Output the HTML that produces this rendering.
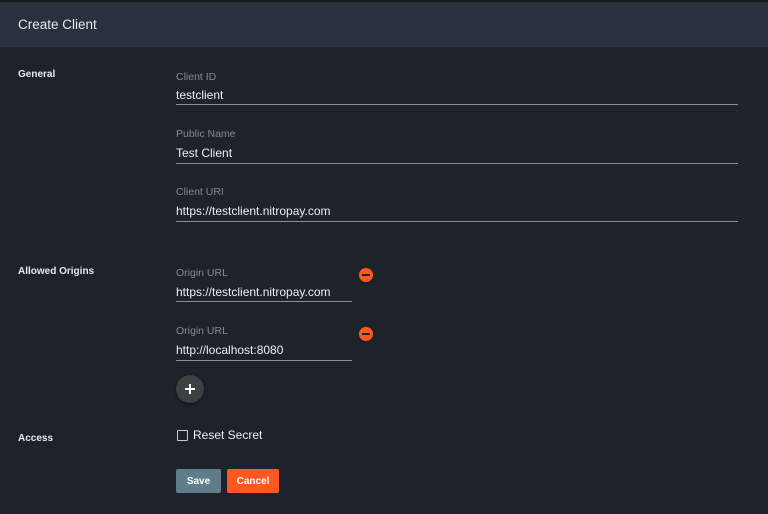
<!DOCTYPE html>
<html><head><style>
*{margin:0;padding:0;box-sizing:border-box}
body{width:768px;height:514px;background:#1d222b;font-family:"Liberation Sans",sans-serif;position:relative;overflow:hidden;color:#e6e8ea}
.hdr{position:absolute;left:0;top:0;width:768px;height:47px;background:#28313d;border-top:2px solid #161a20}
.hdr span{position:absolute;left:18px;top:15px;font-size:13.5px;color:#e8eaed}
.sec{position:absolute;left:18px;font-size:10px;font-weight:bold;color:#e6e8ea}
.lbl{position:absolute;left:176px;font-size:10.5px;color:#858b93}
.val{position:absolute;left:176px;font-size:12px;color:#eceef0}
.ln{position:absolute;left:176px;height:1px;background:#8a8f96}
.minus{position:absolute;width:14px;height:14px;border-radius:50%;background:#ff5722}
.minus:after{content:"";position:absolute;left:3px;top:6px;width:8px;height:2px;background:#1d222b}
.plus{position:absolute;left:176px;top:375px;width:28px;height:28px;border-radius:50%;background:#3e3f41;box-shadow:0 1px 3px rgba(0,0,0,.5)}
.plus:before{content:"";position:absolute;left:9px;top:13px;width:10px;height:2px;background:#fff}
.plus:after{content:"";position:absolute;left:13px;top:9px;width:2px;height:10px;background:#fff}
.btn{position:absolute;top:469px;height:24px;border-radius:2px;font-size:10px;font-weight:bold;color:#fff;text-align:center;line-height:25px}
</style></head><body>
<div class="hdr"><span>Create Client</span></div>
<div class="sec" style="top:69px">General</div>
<div class="lbl" style="top:71px">Client ID</div>
<div class="val" style="top:88px">testclient</div>
<div class="ln" style="top:104px;width:562px"></div>
<div class="lbl" style="top:128px">Public Name</div>
<div class="val" style="top:146px">Test Client</div>
<div class="ln" style="top:163px;width:562px"></div>
<div class="lbl" style="top:186px">Client URI</div>
<div class="val" style="top:204px">https://testclient.nitropay.com</div>
<div class="ln" style="top:221px;width:562px"></div>
<div class="sec" style="top:266px">Allowed Origins</div>
<div class="lbl" style="top:267px">Origin URL</div>
<div class="val" style="top:285px">https://testclient.nitropay.com</div>
<div class="ln" style="top:301px;width:176px"></div>
<div class="minus" style="left:359px;top:268px"></div>
<div class="lbl" style="top:325px">Origin URL</div>
<div class="val" style="top:343px">http://localhost:8080</div>
<div class="ln" style="top:360px;width:176px"></div>
<div class="minus" style="left:359px;top:327px"></div>
<div class="plus"></div>
<div class="sec" style="top:433px">Access</div>
<div style="position:absolute;left:177px;top:430px;width:11px;height:11px;border:1.5px solid #c8cbcf;border-radius:1px"></div>
<div class="val" style="left:193px;top:428px">Reset Secret</div>
<div class="btn" style="left:176px;width:45px;background:#607d8b">Save</div>
<div class="btn" style="left:227px;width:52px;background:#ff5722">Cancel</div>
</body></html>
